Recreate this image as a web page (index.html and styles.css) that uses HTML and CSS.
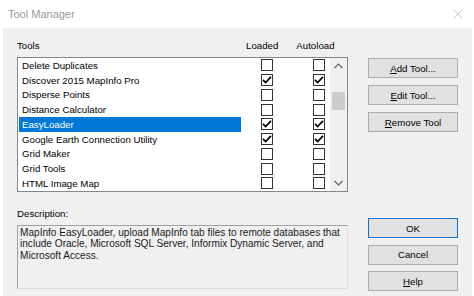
FILE: index.html
```html
<!DOCTYPE html>
<html lang="en">

<head>
    <meta charset="UTF-8">
    <link rel="stylesheet" href="styles.css">
    <title>Tool Manager</title>
</head>

<body>
    <div class="window">
        <div class="titlebar">
            <span class="title">Tool Manager</span>
            <svg class="close" width="10" height="10" viewBox="0 0 10 10">
                <path d="M0.5 0.5 L9.5 9.5 M9.5 0.5 L0.5 9.5" stroke="#c8c8c8" stroke-width="1" fill="none" />
            </svg>
        </div>
        <div class="dialog">
            <div class="left">
                <div class="list-head">
                    <span class="col-tools">Tools</span>
                    <span class="col-loaded">Loaded</span>
                    <span class="col-auto">Autoload</span>
                </div>
                <div class="listbox">
                    <div class="rows">
                        <div class="row"><span class="name">Delete Duplicates</span><span class="check"></span><span class="check"></span></div>
                        <div class="row"><span class="name">Discover 2015 MapInfo Pro</span><span class="check on"></span><span class="check on"></span></div>
                        <div class="row"><span class="name">Disperse Points</span><span class="check"></span><span class="check"></span></div>
                        <div class="row"><span class="name">Distance Calculator</span><span class="check"></span><span class="check"></span></div>
                        <div class="row selected"><span class="name">EasyLoader</span><span class="check on"></span><span class="check on"></span></div>
                        <div class="row"><span class="name">Google Earth Connection Utility</span><span class="check on"></span><span class="check on"></span></div>
                        <div class="row"><span class="name">Grid Maker</span><span class="check"></span><span class="check"></span></div>
                        <div class="row"><span class="name">Grid Tools</span><span class="check"></span><span class="check"></span></div>
                        <div class="row"><span class="name">HTML Image Map</span><span class="check"></span><span class="check"></span></div>
                    </div>
                    <div class="scrollbar">
                        <svg class="arrow" width="9" height="6" viewBox="0 0 9 6">
                            <path d="M0.5 5 L4.5 1 L8.5 5" stroke="#606060" stroke-width="1.2" fill="none" />
                        </svg>
                        <div class="track">
                            <div class="thumb"></div>
                        </div>
                        <svg class="arrow" width="9" height="6" viewBox="0 0 9 6">
                            <path d="M0.5 1 L4.5 5 L8.5 1" stroke="#606060" stroke-width="1.2" fill="none" />
                        </svg>
                    </div>
                </div>
                <div class="desc-label">Description:</div>
                <div class="desc">MapInfo EasyLoader, upload MapInfo tab files to remote databases that<br>include Oracle, Microsoft SQL Server, Informix Dynamic Server, and<br>Microsoft Access.</div>
            </div>
            <div class="right">
                <div class="btn-group">
                    <button class="btn"><u>A</u>dd Tool...</button>
                    <button class="btn"><u>E</u>dit Tool...</button>
                    <button class="btn"><u>R</u>emove Tool</button>
                </div>
                <div class="btn-group bottom">
                    <button class="btn default">OK</button>
                    <button class="btn">Cancel</button>
                    <button class="btn"><u>H</u>elp</button>
                </div>
            </div>
        </div>
    </div>
</body>

</html>
```

FILE: styles.css
```css
* {
    margin: 0;
    padding: 0;
    box-sizing: border-box;
}

body {
    background-color: #ffffff;
    font-family: "Liberation Sans", Arial, sans-serif;
    font-size: 9.7px;
    color: #000000;
}

.window {
    width: 474px;
    height: 296px;
    overflow: hidden;
}

.titlebar {
    height: 28px;
    display: flex;
    align-items: center;
    justify-content: space-between;
    padding: 0 11px 0 8px;
}

.title {
    font-size: 11px;
    color: #9a9a9a;
}

.dialog {
    display: flex;
    height: 268px;
    margin: 0 2px 0 3px;
    background-color: #f0f0f0;
    padding: 9px 0 0 14px;
}

.left {
    width: 331px;
    display: flex;
    flex-direction: column;
}

.list-head {
    display: flex;
    height: 16px;
    align-items: center;
    margin-bottom: 4px;
}

.col-tools {
    width: 229px;
}

.col-auto {
    margin-left: 18px;
}

.listbox {
    display: flex;
    height: 135px;
    border: 1px solid #828790;
    background-color: #ffffff;
}

.rows {
    flex: 1;
}

.row {
    display: flex;
    align-items: center;
    height: 14.75px;
}

.name {
    width: 222px;
    height: 100%;
    display: flex;
    align-items: center;
    padding-left: 3px;
    margin-left: 1px;
}

.selected .name {
    background-color: #0078d7;
    color: #ffffff;
}

.check {
    width: 12px;
    height: 12px;
    border: 1px solid #333333;
    background-color: #ffffff;
    margin-left: 20px;
}

.check + .check {
    margin-left: 40px;
}

.check.on {
    background-image: url("data:image/svg+xml,%3Csvg xmlns='http://www.w3.org/2000/svg' width='10' height='10' viewBox='0 0 10 10'%3E%3Cpath d='M1 4.8 L3.6 7.6 L9 1.8' stroke='%23000' stroke-width='1.7' fill='none'/%3E%3C/svg%3E");
    background-repeat: no-repeat;
    background-position: center;
}

.scrollbar {
    width: 17px;
    background-color: #f0f0f0;
    display: flex;
    flex-direction: column;
    align-items: center;
    padding: 5px 0 5px;
}

.track {
    flex: 1;
    width: 100%;
    padding: 23px 2px 0;
}

.thumb {
    height: 18px;
    background-color: #cdcdcd;
}

.desc-label {
    height: 16px;
    display: flex;
    align-items: center;
    margin-top: 13px;
    margin-bottom: 4px;
}

.desc {
    height: 64px;
    border: 1px solid #a0a0a0;
    border-right-color: #dcdcdc;
    border-bottom-color: #dcdcdc;
    padding: 1px 2px;
    font-size: 10.1px;
    line-height: 11.3px;
    color: #1a1a1a;
}

.right {
    margin-left: 20px;
    padding-top: 21px;
}

.btn-group {
    display: flex;
    flex-direction: column;
    gap: 7px;
}

.btn-group.bottom {
    margin-top: 86px;
    gap: 6.5px;
}

.btn {
    width: 90px;
    height: 20px;
    background-color: #e1e1e1;
    border: 1px solid #adadad;
    font-family: inherit;
    font-size: 9.7px;
    color: #000000;
}

.btn.default {
    border-color: #0078d7;
}
```
